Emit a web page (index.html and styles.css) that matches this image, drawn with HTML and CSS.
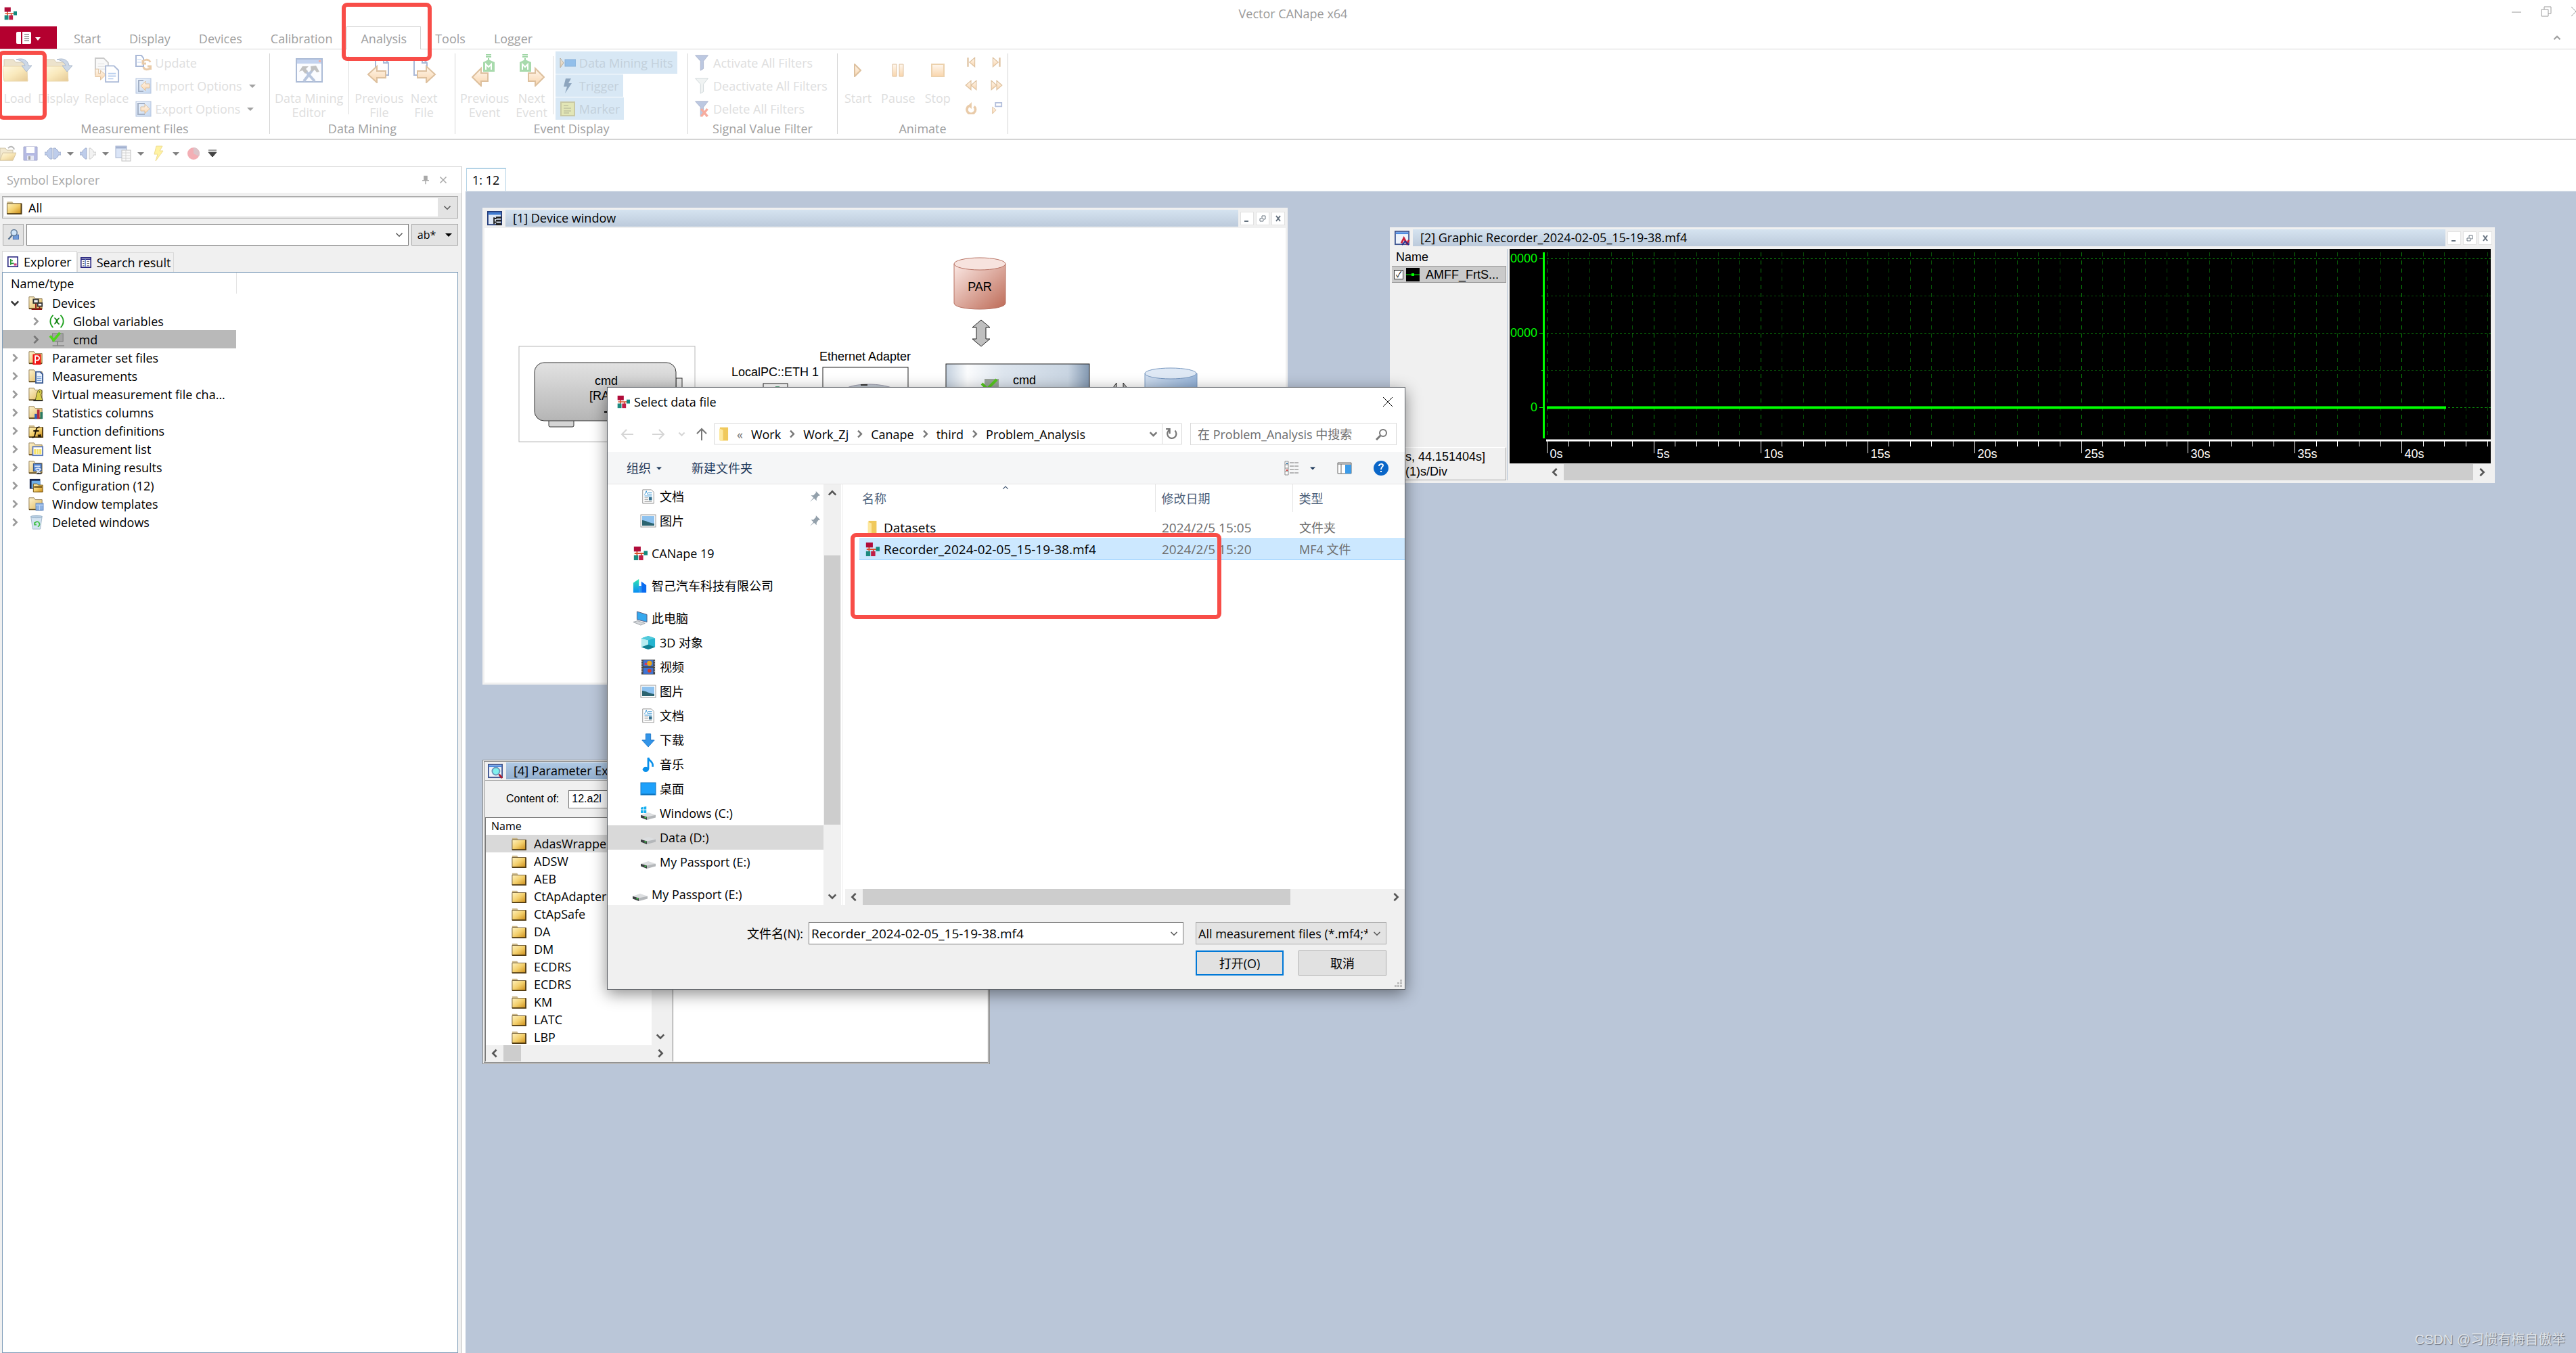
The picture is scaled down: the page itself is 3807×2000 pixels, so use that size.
FILE: index.html
```html
<!DOCTYPE html>
<html lang="zh-CN">
<head>
    <meta charset="UTF-8">
    <meta name="viewport" content="width=device-width, initial-scale=1.0">
    <title>Vector CANape x64</title>
    <link rel="stylesheet" href="styles.css">
</head>
<body>
    <!-- Icon sprite -->
    <svg class="sprite" width="0" height="0" aria-hidden="true">
        <defs>
            <linearGradient id="gold" x1="0" y1="0" x2="1" y2="1">
                <stop offset="0" stop-color="#fff3bf"/><stop offset="0.5" stop-color="#f3cf6c"/><stop offset="1" stop-color="#c98a16"/>
            </linearGradient>
            <linearGradient id="paleGold" x1="0" y1="0" x2="1" y2="1">
                <stop offset="0" stop-color="#fdf3cf"/><stop offset="1" stop-color="#e0b658"/>
            </linearGradient>
            <linearGradient id="orange" x1="0" y1="0" x2="0" y2="1">
                <stop offset="0" stop-color="#fff0dc"/><stop offset="1" stop-color="#f3a349"/>
            </linearGradient>
            <linearGradient id="blueBox" x1="0" y1="0" x2="1" y2="1">
                <stop offset="0" stop-color="#dfeafa"/><stop offset="1" stop-color="#7fa9e0"/>
            </linearGradient>
            <linearGradient id="red3d" x1="0" y1="0" x2="1" y2="1">
                <stop offset="0" stop-color="#fbe9e5"/><stop offset="1" stop-color="#bd6a56"/>
            </linearGradient>
            <linearGradient id="blue3d" x1="0" y1="0" x2="1" y2="1">
                <stop offset="0" stop-color="#d5e2f2"/><stop offset="1" stop-color="#6c94c6"/>
            </linearGradient>
            <linearGradient id="ecuGray" x1="0" y1="0" x2="0" y2="1">
                <stop offset="0" stop-color="#e2e2e2"/><stop offset="1" stop-color="#b5b5b5"/>
            </linearGradient>
            <linearGradient id="ecuBlue" x1="0" y1="0" x2="1" y2="0">
                <stop offset="0" stop-color="#c3d0de"/><stop offset="0.15" stop-color="#fbfcfd"/><stop offset="0.4" stop-color="#dde5ee"/><stop offset="0.85" stop-color="#c9d5e2"/><stop offset="1" stop-color="#8297b0"/>
            </linearGradient>
            <linearGradient id="teal" x1="0" y1="0" x2="0" y2="1">
                <stop offset="0" stop-color="#2fe6b0"/><stop offset="1" stop-color="#0a8cf5"/>
            </linearGradient>
        </defs>

        <symbol id="i-logo" viewBox="0 0 24 24">
            <path d="M7 8v8M3 12h21M14 12v6" stroke="#d8502c" stroke-width="2" fill="none"/>
            <rect x="2" y="1" width="11" height="8" fill="#b00c3a"/>
            <rect x="18" y="8" width="6" height="7" fill="#12897f"/>
            <rect x="2" y="15" width="7" height="8" fill="#1d8a80"/>
            <rect x="10" y="15" width="7" height="8" fill="#c01f48"/>
        </symbol>
        <symbol id="i-folder" viewBox="0 0 24 24">
            <path d="M1 3h8l2 3h12v16H1z" fill="#cbb88a"/>
            <path d="M1 6h22v16H1z" fill="url(#gold)" stroke="#6e5a35" stroke-width="1"/>
            <path d="M1 22h22V6" fill="none" stroke="#4f3a12" stroke-width="2"/>
        </symbol>
        <symbol id="i-pfolder" viewBox="0 0 24 24">
            <path d="M1 2h8l2 3h11v16H1z" fill="url(#paleGold)" stroke="#8e7a51" stroke-width="1"/>
            <path d="M1 21h21" stroke="#5a4418" stroke-width="2"/>
        </symbol>
        <symbol id="i-devices" viewBox="0 0 24 24">
            <use href="#i-pfolder"/>
            <rect x="8" y="6" width="8" height="6" fill="#eee" stroke="#333" stroke-width="2"/><rect x="15" y="12" width="7" height="5" fill="#fff" stroke="#333" stroke-width="2"/>
            <path d="M12 13v7M5 22h17M18 18v4" stroke="#8a1212" stroke-width="2" fill="none"/>
        </symbol>
        <symbol id="i-paramset" viewBox="0 0 24 24">
            <use href="#i-pfolder"/><rect x="7" y="6" width="13" height="17" fill="#f01414"/>
            <path d="M11 21V9h3a3 3 0 0 1 0 7h-3" stroke="#fff" stroke-width="2" fill="none"/>
        </symbol>
        <symbol id="i-measure" viewBox="0 0 24 24">
            <use href="#i-pfolder"/><path d="M12 5h7l4 4v14H12z" fill="#eaf2fd" stroke="#35568f" stroke-width="2"/>
            <path d="M14 13h7M14 16h7M14 19h7" stroke="#5f8fd0"/>
        </symbol>
        <symbol id="i-virtual" viewBox="0 0 24 24">
            <use href="#i-pfolder"/><path d="M11 22c2-6 2-16 7-18 4 0 5 5 2 8l3 10z" fill="#d9cf4a" stroke="#4d4a1d"/>
            <circle cx="18" cy="8" r="1" fill="#222"/><path d="M8 22h15" stroke="#222" stroke-width="2"/>
        </symbol>
        <symbol id="i-stats" viewBox="0 0 24 24">
            <use href="#i-pfolder"/><rect x="10" y="14" width="4" height="8" fill="#2b5bb5"/><rect x="14" y="7" width="4" height="15" fill="#b42a3d"/><rect x="19" y="11" width="4" height="11" fill="#2a7a63"/>
        </symbol>
        <symbol id="i-func" viewBox="0 0 24 24">
            <use href="#i-folder"/><path d="M18 6c-4-1-5 2-6 6l-2 8c0 2-3 3-4 2M8 12h9M15 19h3l2 3M20 18l-4 4" stroke="#1c1305" stroke-width="2" fill="none"/>
        </symbol>
        <symbol id="i-list" viewBox="0 0 24 24">
            <use href="#i-pfolder"/><rect x="7" y="8" width="16" height="14" fill="#fff" stroke="#5c79b8" stroke-width="2"/>
            <path d="M9 12h12v8H9z" fill="#f4e26a"/><path d="M13 12v8M17 12v8" stroke="#fff"/>
        </symbol>
        <symbol id="i-mining" viewBox="0 0 24 24">
            <use href="#i-pfolder"/><rect x="8" y="6" width="13" height="12" fill="#5585cf" stroke="#29487e"/>
            <path d="M10 10h9M11 15c4-3 8-2 9 1M13 22l7-8M20 22l-7-6" stroke="#d8e4f7" stroke-width="2" fill="none"/><path d="M13 22h8" stroke="#333" stroke-width="2"/>
        </symbol>
        <symbol id="i-config" viewBox="0 0 24 24">
            <rect x="2" y="1" width="17" height="16" fill="#16254f"/><rect x="5" y="4" width="14" height="12" fill="#6fb0ea"/>
            <path d="M8 9h6l2 2h7v11H8z" fill="url(#gold)" stroke="#6b4a0a"/><path d="M9 14h13" stroke="#5c3d05" stroke-width="2"/>
        </symbol>
        <symbol id="i-template" viewBox="0 0 24 24">
            <use href="#i-pfolder"/><rect x="12" y="11" width="12" height="11" fill="#8fb3e3" stroke="#5f88c4"/><path d="M12 14h12M18 14v8" stroke="#c7dbf5"/>
        </symbol>
        <symbol id="i-bin" viewBox="0 0 24 24">
            <path d="M4 3h18l-3 20H7z" fill="#d3e3f1" stroke="#9fb4c8"/><ellipse cx="13" cy="3" rx="9" ry="2" fill="#b5cde2" stroke="#8da7be"/>
            <path d="M10 16a4 4 0 1 1 5 3M10 12v4h3" stroke="#3fc043" stroke-width="2" fill="none"/>
        </symbol>
        <symbol id="i-var" viewBox="0 0 24 24">
            <path d="M6 2C0 8 0 16 6 22M18 2c6 6 6 14 0 20" stroke="#1ba01b" stroke-width="2" fill="none"/>
            <path d="M8 7c4-1 4 10 8 9M16 7c-3 0-5 9-8 9" stroke="#0c7d0c" stroke-width="2" fill="none"/>
        </symbol>
        <symbol id="i-check" viewBox="0 0 24 24">
            <rect x="5" y="2" width="17" height="13" fill="#a3a3a3" stroke="#7e7e7e"/><path d="M13 15v6M5 22h19" stroke="#8a8a8a" stroke-width="2"/>
            <path d="M1 6l6 7L17 1" stroke="#4ed51c" stroke-width="4" fill="none"/>
        </symbol>
        <symbol id="i-search-doc" viewBox="0 0 24 24">
            <rect x="11" y="12" width="11" height="9" fill="#6f9ada" stroke="#3760a5"/><circle cx="13" cy="8" r="6" fill="#cfe4f8" stroke="#5d7896" stroke-width="2"/>
            <path d="M9 13L2 21" stroke="#55708e" stroke-width="3"/>
        </symbol>
        <symbol id="i-tree" viewBox="0 0 20 20">
            <rect x="1" y="1" width="18" height="18" fill="#fff" stroke="#26247e" stroke-width="2"/><path d="M6 5v11M6 8h4M6 13h6" stroke="#2f9a3c" stroke-width="2"/><path d="M12 13h5v4h-5z" fill="#c63f7d"/>
        </symbol>
        <symbol id="i-table" viewBox="0 0 20 20">
            <rect x="1" y="1" width="18" height="18" fill="#fff" stroke="#26247e" stroke-width="2"/><path d="M1 4h18" stroke="#26247e" stroke-width="2"/><path d="M9 4v14" stroke="#6b8fd4" stroke-width="2"/><path d="M4 8h3M4 12h3M4 16h3M12 8h4M12 12h4M12 16h4" stroke="#333"/>
        </symbol>
        <symbol id="i-chev-down" viewBox="0 0 16 16"><path d="M2 5l6 6 6-6" stroke="currentColor" stroke-width="2" fill="none"/></symbol>
        <symbol id="i-chev-up" viewBox="0 0 16 16"><path d="M2 11l6-6 6 6" stroke="currentColor" stroke-width="2" fill="none"/></symbol>
        <symbol id="i-chev-right" viewBox="0 0 16 16"><path d="M5 2l6 6-6 6" stroke="currentColor" stroke-width="3" fill="none"/></symbol>
        <symbol id="i-chev-left" viewBox="0 0 16 16"><path d="M11 2L5 8l6 6" stroke="currentColor" stroke-width="3" fill="none"/></symbol>
        <symbol id="i-chev-bold" viewBox="0 0 16 16"><path d="M2 5l6 6 6-6" stroke="currentColor" stroke-width="3" fill="none"/></symbol>
        <symbol id="i-chev-bold-up" viewBox="0 0 16 16"><path d="M2 11l6-6 6 6" stroke="currentColor" stroke-width="3" fill="none"/></symbol>
        <symbol id="i-caret" viewBox="0 0 10 10"><path d="M0 3h10L5 8z" fill="currentColor"/></symbol>
        <symbol id="i-x" viewBox="0 0 16 16"><path d="M1 1l14 14M15 1L1 15" stroke="currentColor" fill="none"/></symbol>
        <symbol id="i-x-bold" viewBox="0 0 16 16"><path d="M2 2l12 12M14 2L2 14" stroke="currentColor" stroke-width="2" fill="none"/></symbol>
        <symbol id="i-pin" viewBox="0 0 16 20"><path d="M4 1h8v9h3v2H1v-2h3zM7 12h2v7H7z" fill="currentColor"/></symbol>

        <!-- Ribbon -->
        <symbol id="r-load" viewBox="0 0 44 36">
            <path d="M2 2h14l3 4h17v26H2z" fill="#d8c390" stroke="#a08a55"/><path d="M0 12h35l2 22H2z" fill="url(#gold)" stroke="#d0a445"/>
            <path d="M20 2c10-3 17 1 18 9h5l-8 9-7-9h5c-1-4-6-8-13-9z" fill="#8fa9cc" stroke="#48658f"/>
        </symbol>
        <symbol id="r-replace" viewBox="0 0 40 40">
            <path d="M2 1h13l7 7v18H2z" fill="#f2f2f2" stroke="#8c8c8c" stroke-width="2"/><path d="M6 10h10M6 14h12M6 18h12" stroke="#b5b5b5"/>
            <path d="M2 18v12h8v5l8-8-8-7v5H7v-7z" fill="url(#orange)" stroke="#b57529"/>
            <path d="M18 13h13l7 7v18H18z" fill="#fff" stroke="#4466a8" stroke-width="2"/><path d="M22 25h12M22 29h12M22 33h8" stroke="#6c9add" stroke-width="2"/>
        </symbol>
        <symbol id="r-update" viewBox="0 0 24 24">
            <path d="M1 1h8l3 4v12H1z" fill="#fff" stroke="#4466a8" stroke-width="2"/><path d="M3 7h6M3 11h6" stroke="#6c9add"/>
            <path d="M11 12c0-6 10-6 11-1M11 8v5h5M23 17c-1 6-10 6-11 1M23 22v-5h-5" stroke="#cf8d43" stroke-width="3" fill="none"/>
        </symbol>
        <symbol id="r-import" viewBox="0 0 24 24">
            <rect x="1" y="1" width="22" height="22" fill="url(#blueBox)" stroke="#5a7cb5"/><path d="M12 4H5v16h7" fill="none" stroke="#34517f" stroke-width="2"/>
            <path d="M21 9h-6V5l-7 7 7 7v-4h6z" fill="url(#orange)" stroke="#b57529"/>
        </symbol>
        <symbol id="r-export" viewBox="0 0 24 24">
            <rect x="1" y="1" width="22" height="22" fill="url(#blueBox)" stroke="#5a7cb5"/><path d="M14 4H4v16h10" fill="none" stroke="#34517f" stroke-width="2"/>
            <path d="M8 9h6V5l7 7-7 7v-4H8z" fill="url(#orange)" stroke="#b57529"/>
        </symbol>
        <symbol id="r-editor" viewBox="0 0 40 36">
            <rect x="1" y="1" width="38" height="34" fill="#f7faff" stroke="#4a69a6" stroke-width="2"/><rect x="2" y="2" width="36" height="6" fill="#7da0dc"/><path d="M34 3h3v3h-3z" fill="#e0523c"/>
            <path d="M12 34l14-18" stroke="#6482b8" stroke-width="4"/><path d="M28 34L12 16" stroke="#6482b8" stroke-width="4"/>
            <path d="M5 20l5-8h9l-4 4 3 3-4 4-4-5zM22 12l8-1 5 9-4 1-3-4-5 3z" fill="#777"/>
        </symbol>
        <symbol id="r-prev" viewBox="0 0 34 38">
            <path d="M12 1h12l7 7v18H12z" fill="#fff" stroke="#4466a8" stroke-width="2"/><path d="M24 1v7h7" fill="none" stroke="#4466a8" stroke-width="2"/>
            <path d="M27 20H14v-7L1 25l13 12v-7h13z" fill="url(#orange)" stroke="#b57529" stroke-width="2"/>
        </symbol>
        <symbol id="r-next" viewBox="0 0 34 38">
            <path d="M2 1h12l7 7v18H2z" fill="#fff" stroke="#4466a8" stroke-width="2"/><path d="M14 1v7h7" fill="none" stroke="#4466a8" stroke-width="2"/>
            <path d="M7 20h13v-7l13 12-13 12v-7H7z" fill="url(#orange)" stroke="#b57529" stroke-width="2"/>
        </symbol>
        <symbol id="r-prev-ev" viewBox="0 0 38 48">
            <path d="M21 1h8M21 4h8M25 6v5" stroke="#2fa53c" stroke-width="2"/><path d="M17 12l8-4 9 4v14H17z" fill="#3fae4a"/><path d="M21 23v-8l4 4 4-4v8" stroke="#fff" stroke-width="2" fill="none"/>
            <path d="M24 28H14v-7L1 34l13 13v-7h10z" fill="url(#orange)" stroke="#b57529" stroke-width="2"/>
        </symbol>
        <symbol id="r-next-ev" viewBox="0 0 38 48">
            <path d="M5 1h8M5 4h8M9 6v5" stroke="#2fa53c" stroke-width="2"/><path d="M1 12l8-4 9 4v14H1z" fill="#3fae4a"/><path d="M5 23v-8l4 4 4-4v8" stroke="#fff" stroke-width="2" fill="none"/>
            <path d="M14 28h10v-7l13 13-13 13v-7H14z" fill="url(#orange)" stroke="#b57529" stroke-width="2"/>
        </symbol>
        <symbol id="r-hits" viewBox="0 0 24 24"><path d="M1 5l5 7-5 7z" fill="url(#orange)" stroke="#8c6b3c"/><rect x="8" y="7" width="16" height="10" fill="#3f8fdd" stroke="#2a6fb5"/></symbol>
        <symbol id="r-trigger" viewBox="0 0 24 24"><path d="M9 1h8l-4 7h5L8 23l3-10H6z" fill="#34567c"/></symbol>
        <symbol id="r-marker" viewBox="0 0 24 24"><rect x="2" y="2" width="20" height="20" fill="#efe56b" stroke="#b9a441" stroke-width="2"/><path d="M6 7h7M6 11h11M6 15h11M6 18h8" stroke="#7d6e1e"/></symbol>
        <symbol id="r-filter" viewBox="0 0 24 28"><path d="M1 1h22l-8 10v13l-5 3V11z" fill="#6d86bd" stroke="#41588f"/></symbol>
        <symbol id="r-filter-off" viewBox="0 0 24 28"><path d="M1 1h22l-8 10v13l-5 3V11z" fill="#dfe6e6" stroke="#8fa1a6"/></symbol>
        <symbol id="r-filter-del" viewBox="0 0 24 28"><path d="M1 1h22l-8 10v13l-5 3V11z" fill="#6d86bd" stroke="#41588f"/><path d="M11 14l11 13M22 14L11 27" stroke="#ee4a2b" stroke-width="4"/></symbol>
        <symbol id="r-start" viewBox="0 0 20 20"><path d="M5 1l9 9-9 9z" fill="url(#orange)" stroke="#b57529" stroke-width="2"/></symbol>
        <symbol id="r-pause" viewBox="0 0 20 20"><path d="M2 1h6v18H2zM12 1h6v18h-6z" fill="url(#orange)" stroke="#b57529"/></symbol>
        <symbol id="r-stop" viewBox="0 0 20 20"><rect x="1" y="1" width="18" height="18" fill="url(#orange)" stroke="#d79a4a" stroke-width="2"/></symbol>
        <symbol id="r-first" viewBox="0 0 16 16"><path d="M4 2v12" stroke="#b57529" stroke-width="2"/><path d="M13 2L6 8l7 6z" fill="url(#orange)" stroke="#b57529"/></symbol>
        <symbol id="r-last" viewBox="0 0 16 16"><path d="M12 2v12" stroke="#b57529" stroke-width="2"/><path d="M3 2l7 6-7 6z" fill="url(#orange)" stroke="#b57529"/></symbol>
        <symbol id="r-rew" viewBox="0 0 16 16"><path d="M8 2L1 8l7 6zM15 2L8 8l7 6z" fill="url(#orange)" stroke="#b57529"/></symbol>
        <symbol id="r-fwd" viewBox="0 0 16 16"><path d="M1 2l7 6-7 6zM8 2l7 6-7 6z" fill="url(#orange)" stroke="#b57529"/></symbol>
        <symbol id="r-loop" viewBox="0 0 18 20"><path d="M14 7a7 7 0 1 1-8-1" stroke="#cf8d43" stroke-width="4" fill="none"/><path d="M4 6l6-6v11z" fill="#cf8d43"/></symbol>
        <symbol id="r-step" viewBox="0 0 18 20"><path d="M2 8l6 5-6 6z" fill="url(#orange)" stroke="#b57529"/><rect x="7" y="1" width="10" height="6" fill="#fff" stroke="#5a76b5" stroke-width="2"/></symbol>

        <!-- Quick access -->
        <symbol id="q-open" viewBox="0 0 24 24"><path d="M0 4h8l2 3h9v15H0z" fill="#e7d5a3" stroke="#a18b55"/><path d="M4 11h20l-5 11H0z" fill="url(#gold)" stroke="#b1914c"/><path d="M12 4c4-4 8-2 9 2" stroke="#777" stroke-width="2" fill="none"/></symbol>
        <symbol id="q-save" viewBox="0 0 24 24"><path d="M2 2h20v20H2z" fill="#6d77c9" stroke="#4a5297"/><path d="M6 2h12v9H6z" fill="#fff"/><path d="M7 15h10v7H7z" fill="#cfd3ea"/><path d="M9 16h3v5H9z" fill="#444"/></symbol>
        <symbol id="q-on" viewBox="0 0 24 24"><path d="M11 4v16H8l-4-4v-2H0v-4h4V8l4-4zM13 4v16h3l4-4v-2h4v-4h-4V8l-4-4z" fill="#7f9cd8" stroke="#49639c"/></symbol>
        <symbol id="q-off" viewBox="0 0 24 24"><path d="M10 4v16H8l-4-4v-2H0v-4h4V8l4-4z" fill="#7f9cd8" stroke="#49639c"/><path d="M14 4v16h2l4-4v-2h4v-4h-4V8l-4-4z" fill="#e6e6e6" stroke="#999"/></symbol>
        <symbol id="q-pages" viewBox="0 0 24 24"><rect x="1" y="1" width="16" height="17" fill="#b9cdf0" stroke="#4c68a3"/><path d="M1 3h16" stroke="#4c68a3" stroke-width="3"/><rect x="10" y="7" width="13" height="16" fill="#f6f6f6" stroke="#888"/><path d="M10 11h13M10 15h13M10 19h13M16 7v16" stroke="#aaa"/></symbol>
        <symbol id="q-bolt" viewBox="0 0 24 24"><path d="M9 1h9l-4 7h5L8 23l3-10H6z" fill="#ffe94a" stroke="#e0b924"/></symbol>
        <symbol id="q-rec" viewBox="0 0 24 24"><circle cx="12" cy="12" r="9" fill="#e8606c"/><path d="M12 12V3a9 9 0 0 1 8 13z" fill="#b98a94"/></symbol>

        <!-- File dialog -->
        <symbol id="f-doc" viewBox="0 0 24 24"><path d="M3 1h14l4 4v18H3z" fill="#fff" stroke="#8c8c8c"/><path d="M6 9l3-6 2 6M12 5h6M12 8h6M6 11h12" stroke="#2f8fd0" fill="none"/><path d="M6 14h6M6 17h6M6 20h12" stroke="#999"/><path d="M13 13h5v5h-5z" fill="#35708f"/></symbol>
        <symbol id="f-pic" viewBox="0 0 24 20"><rect x="1" y="1" width="22" height="18" fill="#fff" stroke="#9a9a9a"/><path d="M3 3h18v14H3z" fill="#8ec2ef"/><path d="M3 9c5 0 10 4 18 5v3H3z" fill="#2c6470"/></symbol>
        <symbol id="f-corp" viewBox="0 0 24 24"><path d="M1 7l9-6v22H1z" fill="url(#teal)"/><path d="M14 5l8 6v12h-8z" fill="#0a6cf0"/><path d="M10 12h4v11h-4z" fill="#2196f3"/></symbol>
        <symbol id="f-pc" viewBox="0 0 24 24"><path d="M7 1l16 5v12L7 14z" fill="#35a8ee" stroke="#557"/><path d="M1 18l7-2 12 4-7 3z" fill="#d5d8db" stroke="#9aa0a6"/></symbol>
        <symbol id="f-3d" viewBox="0 0 24 24"><path d="M12 1l11 4v14l-11 4-11-4V5z" fill="#25b4cf"/><path d="M1 5l11 3v8L1 19z" fill="#b6ecf0"/><path d="M12 1l11 4-11 3L1 5z" fill="#52cadb"/><path d="M1 19l11-4 11 4-11 4z" fill="#0f7f91"/></symbol>
        <symbol id="f-video" viewBox="0 0 24 24"><rect x="1" y="0" width="22" height="24" fill="#444"/><rect x="4" y="1" width="16" height="10" fill="#3e74d4"/><rect x="4" y="13" width="16" height="10" fill="#3e74d4"/><circle cx="14" cy="6" r="4" fill="#e9a51c"/><circle cx="8" cy="7" r="2" fill="#d83a5a"/><circle cx="14" cy="18" r="3" fill="#da3b22"/><path d="M2 2v20M22 2v20" stroke="#eee" stroke-dasharray="2 2"/></symbol>
        <symbol id="f-down" viewBox="0 0 24 24"><path d="M8 2h8v10h6L12 23 2 12h6z" fill="#3294e8" stroke="#1d77c8"/></symbol>
        <symbol id="f-music" viewBox="0 0 24 24"><ellipse cx="8" cy="20" rx="5" ry="4" fill="#0a90ea"/><path d="M12 20V1c1 6 9 6 7 15" stroke="#0a90ea" stroke-width="3" fill="none"/></symbol>
        <symbol id="f-desk" viewBox="0 0 24 20"><rect x="1" y="1" width="22" height="18" fill="#1ea1fb" stroke="#1079c4"/><path d="M2 18h20" stroke="#0c5a96"/></symbol>
        <symbol id="f-drive" viewBox="0 0 24 24"><path d="M0 15l12-4 12 4-9 4z" fill="#dcdee0"/><path d="M0 15l10 3v5L0 19z" fill="#3c3f42"/><path d="M10 18l14-3v4l-14 4z" fill="#b4b7ba"/><path d="M6 19h3" stroke="#3ed04a" stroke-width="2"/></symbol>
        <symbol id="f-win" viewBox="0 0 24 24"><use href="#f-drive"/><path d="M0 3l4-1v4H0zM5 2l4-1v5H5zM0 7h4v5H0zM5 7h4v5H5z" fill="#17aff0"/></symbol>
        <symbol id="f-folder" viewBox="0 0 16 24"><path d="M2 1h13v21H2z" fill="#f0c95c"/><path d="M1 3l6 2v18l-6-2z" fill="#fde89f"/></symbol>
        <symbol id="f-pin" viewBox="0 0 20 20"><path d="M12 1l7 7-3 1-3 4v4l-4-4-7 6 6-7-4-4h4l4-4z" fill="#93a0ab"/></symbol>
    </svg>

    <header class="titlebar">
        <svg class="ic"><use href="#i-logo"/></svg>
        <h1>Vector CANape x64</h1>
        <div class="window-controls">
            <button aria-label="Minimize"><svg viewBox="0 0 16 16"><path d="M1 9h14" stroke="currentColor"/></svg></button>
            <button aria-label="Restore"><svg viewBox="0 0 16 16"><path d="M1 5h10v10H1zM5 5V1h10v10h-4" stroke="currentColor" fill="none"/></svg></button>
            <button aria-label="Close"><svg><use href="#i-x"/></svg></button>
        </div>
    </header>

    <nav class="tabs">
        <button class="app-menu" aria-label="Application menu">
            <svg viewBox="0 0 38 20"><rect x="1" y="1" width="22" height="18" rx="2" fill="#fff"/><path d="M9 1v18" stroke="#b4002f" stroke-width="2"/><path d="M13 5h7M13 8h7M13 11h7M13 14h7" stroke="#555"/><path d="M29 9h8l-4 5z" fill="#fff"/></svg>
        </button>
        <a href="#">Start</a>
        <a href="#">Display</a>
        <a href="#">Devices</a>
        <a href="#">Calibration</a>
        <a href="#" class="current">Analysis</a>
        <a href="#">Tools</a>
        <a href="#">Logger</a>
        <button class="collapse" aria-label="Collapse ribbon"><svg><use href="#i-chev-bold-up"/></svg></button>
    </nav>

    <section class="ribbon">
        <div class="group">
            <div class="tools files">
                <button class="big" disabled><svg class="wide"><use href="#r-load"/></svg>Load</button>
                <button class="big" disabled><svg class="wide"><use href="#r-load"/></svg>Display</button>
                <button class="big" disabled><svg><use href="#r-replace"/></svg>Replace</button>
                <div class="stack">
                    <button disabled><svg><use href="#r-update"/></svg>Update</button>
                    <button disabled><svg><use href="#r-import"/></svg>Import Options<svg class="caret"><use href="#i-caret"/></svg></button>
                    <button disabled><svg><use href="#r-export"/></svg>Export Options<svg class="caret"><use href="#i-caret"/></svg></button>
                </div>
            </div>
            <h2>Measurement Files</h2>
        </div>
        <div class="group">
            <div class="tools">
                <button class="big" disabled><svg><use href="#r-editor"/></svg>Data Mining<br>Editor</button>
                <hr>
                <button class="big" disabled><svg><use href="#r-prev"/></svg>Previous<br>File</button>
                <button class="big" disabled><svg><use href="#r-next"/></svg>Next<br>File</button>
            </div>
            <h2>Data Mining</h2>
        </div>
        <div class="group">
            <div class="tools">
                <button class="big" disabled><svg class="tall"><use href="#r-prev-ev"/></svg>Previous<br>Event</button>
                <button class="big" disabled><svg class="tall"><use href="#r-next-ev"/></svg>Next<br>Event</button>
                <hr>
                <div class="stack toggles">
                    <button disabled><svg><use href="#r-hits"/></svg>Data Mining Hits</button>
                    <button disabled><svg><use href="#r-trigger"/></svg>Trigger</button>
                    <button disabled><svg><use href="#r-marker"/></svg>Marker</button>
                </div>
            </div>
            <h2>Event Display</h2>
        </div>
        <div class="group">
            <div class="tools">
                <div class="stack">
                    <button disabled><svg><use href="#r-filter"/></svg>Activate All Filters</button>
                    <button disabled><svg><use href="#r-filter-off"/></svg>Deactivate All Filters</button>
                    <button disabled><svg><use href="#r-filter-del"/></svg>Delete All Filters</button>
                </div>
            </div>
            <h2>Signal Value Filter</h2>
        </div>
        <div class="group">
            <div class="tools animate">
                <button class="big" disabled><svg class="small"><use href="#r-start"/></svg>Start</button>
                <button class="big" disabled><svg class="small"><use href="#r-pause"/></svg>Pause</button>
                <button class="big" disabled><svg class="small"><use href="#r-stop"/></svg>Stop</button>
                <div class="transport">
                    <button disabled aria-label="First"><svg><use href="#r-first"/></svg></button>
                    <button disabled aria-label="Last"><svg><use href="#r-last"/></svg></button>
                    <button disabled aria-label="Rewind"><svg><use href="#r-rew"/></svg></button>
                    <button disabled aria-label="Forward"><svg><use href="#r-fwd"/></svg></button>
                    <button disabled aria-label="Loop"><svg><use href="#r-loop"/></svg></button>
                    <button disabled aria-label="Step"><svg><use href="#r-step"/></svg></button>
                </div>
            </div>
            <h2>Animate</h2>
        </div>
    </section>

    <div class="quick">
        <button aria-label="Open"><svg><use href="#q-open"/></svg></button>
        <button aria-label="Save"><svg><use href="#q-save"/></svg></button>
        <button aria-label="Go online"><svg><use href="#q-on"/></svg><svg class="caret"><use href="#i-caret"/></svg></button>
        <button aria-label="Go offline"><svg><use href="#q-off"/></svg><svg class="caret"><use href="#i-caret"/></svg></button>
        <button aria-label="Pages"><svg><use href="#q-pages"/></svg><svg class="caret"><use href="#i-caret"/></svg></button>
        <button aria-label="Start measurement"><svg><use href="#q-bolt"/></svg><svg class="caret"><use href="#i-caret"/></svg></button>
        <button aria-label="Record"><svg><use href="#q-rec"/></svg></button>
        <button class="more" aria-label="Customize"><svg viewBox="0 0 12 12"><path d="M0 1h12M0 4h12l-6 7z" fill="#444" stroke="#444"/></svg></button>
    </div>

    <main>
        <aside class="explorer">
            <div class="panel-title">
                <h2>Symbol Explorer</h2>
                <button aria-label="Pin"><svg><use href="#i-pin"/></svg></button>
                <button aria-label="Close"><svg><use href="#i-x-bold"/></svg></button>
            </div>
            <div class="combo">
                <svg class="ic"><use href="#i-folder"/></svg>
                <select aria-label="Filter"><option>All</option></select>
                <span class="drop"><svg><use href="#i-chev-down"/></svg></span>
            </div>
            <div class="search-row">
                <button aria-label="Search"><svg class="ic"><use href="#i-search-doc"/></svg></button>
                <div class="search-box"><input type="text" aria-label="Search text"><svg><use href="#i-chev-down"/></svg></div>
                <button class="mode">ab*<svg><use href="#i-caret"/></svg></button>
            </div>
            <div class="panel-tabs">
                <button class="current"><svg><use href="#i-tree"/></svg>Explorer</button>
                <button><svg><use href="#i-table"/></svg>Search result</button>
            </div>
            <div class="tree-box">
                <div class="tree-head">Name/type</div>
                <ul class="tree">
                    <li class="open"><svg class="exp"><use href="#i-chev-bold"/></svg><svg class="ic"><use href="#i-devices"/></svg>Devices</li>
                    <li class="sub"><svg class="exp"><use href="#i-chev-right"/></svg><svg class="ic"><use href="#i-var"/></svg>Global variables</li>
                    <li class="sub selected"><svg class="exp"><use href="#i-chev-right"/></svg><svg class="ic"><use href="#i-check"/></svg>cmd</li>
                    <li><svg class="exp"><use href="#i-chev-right"/></svg><svg class="ic"><use href="#i-paramset"/></svg>Parameter set files</li>
                    <li><svg class="exp"><use href="#i-chev-right"/></svg><svg class="ic"><use href="#i-measure"/></svg>Measurements</li>
                    <li><svg class="exp"><use href="#i-chev-right"/></svg><svg class="ic"><use href="#i-virtual"/></svg>Virtual measurement file cha...</li>
                    <li><svg class="exp"><use href="#i-chev-right"/></svg><svg class="ic"><use href="#i-stats"/></svg>Statistics columns</li>
                    <li><svg class="exp"><use href="#i-chev-right"/></svg><svg class="ic"><use href="#i-func"/></svg>Function definitions</li>
                    <li><svg class="exp"><use href="#i-chev-right"/></svg><svg class="ic"><use href="#i-list"/></svg>Measurement list</li>
                    <li><svg class="exp"><use href="#i-chev-right"/></svg><svg class="ic"><use href="#i-mining"/></svg>Data Mining results</li>
                    <li><svg class="exp"><use href="#i-chev-right"/></svg><svg class="ic"><use href="#i-config"/></svg>Configuration (12)</li>
                    <li><svg class="exp"><use href="#i-chev-right"/></svg><svg class="ic"><use href="#i-template"/></svg>Window templates</li>
                    <li><svg class="exp"><use href="#i-chev-right"/></svg><svg class="ic"><use href="#i-bin"/></svg>Deleted windows</li>
                </ul>
            </div>
        </aside>

        <section class="workspace">
            <div class="page-tabs"><button>1: 12</button></div>
            <div class="desktop">
                <article class="win device-win">
                    <div class="win-title">
                        <svg class="win-icon" viewBox="0 0 24 24"><rect x="1" y="1" width="22" height="21" fill="#dfe8f5" stroke="#223b7a" stroke-width="2"/><path d="M2 4h20" stroke="#3f7bd0" stroke-width="4"/><path d="M11 10v11M11 12h4M11 18h4" stroke="#222" stroke-width="2"/><path d="M14 9h9v3h-9zM14 14h9v3h-9zM14 19h9v4h-9z" fill="#222"/></svg>
                        <h3>[1] Device window</h3>
                        <button aria-label="Minimize"><svg viewBox="0 0 12 12"><path d="M2 10h6" stroke="currentColor" stroke-width="2"/></svg></button>
                        <button aria-label="Restore"><svg viewBox="0 0 12 12"><path d="M2 6h5v4H2zM5 5V2h5v5H8" stroke="currentColor" stroke-width="1" fill="none"/></svg></button>
                        <button aria-label="Close"><svg viewBox="0 0 12 12"><path d="M3 2l6 8M9 2l-6 8" stroke="currentColor" stroke-width="2"/></svg></button>
                    </div>
                    <svg class="diagram" viewBox="716 337 1184 672">
                        <rect x="767" y="512" width="260" height="141" fill="#fff" stroke="#b8b8b8"/>
                        <rect x="999" y="559" width="9" height="40" fill="#e8e8e8" stroke="#333"/>
                        <rect x="811" y="620" width="37" height="11" rx="2" fill="#d5d5d5" stroke="#333"/>
                        <rect x="790" y="536" width="209" height="86" rx="14" fill="url(#ecuGray)" stroke="#333" stroke-width="1"/>
                        <text x="879" y="569">cmd</text>
                        <text x="871" y="591">[RAM]</text>
                        <path d="M893 609h8" stroke="#000" stroke-width="2"/>
                        <text x="1081" y="556">LocalPC::ETH 1</text>
                        <rect x="1128" y="567" width="36" height="30" fill="#fff" stroke="#222"/><path d="M1146 571h6v4h-6z" fill="#6a8"/>
                        <text x="1211" y="533">Ethernet Adapter</text>
                        <rect x="1216" y="543" width="126" height="70" fill="#fff" stroke="#222"/>
                        <path d="M1250 574c16-8 50-8 70 0" fill="#c5ccd6" stroke="#99a"/><path d="M1272 569h10" stroke="#333" stroke-width="2"/>
                        <rect x="1398" y="538" width="212" height="70" fill="url(#ecuBlue)" stroke="#222"/>
                        <path d="M1455 560h21v20h-21z" fill="#9aa39a"/><path d="M1451 567l8 8 14-14" stroke="#55c81e" stroke-width="4" fill="none"/>
                        <text x="1497" y="568">cmd</text>
                        <path d="M1410 390v58c0 12 76 12 76 0v-58z" fill="url(#red3d)" stroke="#b77263"/>
                        <ellipse cx="1448" cy="390" rx="38" ry="9" fill="#f7e3de" stroke="#b77263"/>
                        <text x="1448" y="430" text-anchor="middle">PAR</text>
                        <path d="M1450 473l13 11h-6v17h6l-13 11-13-11h6v-17h-6z" fill="#bfbfbf" stroke="#222"/>
                        <path d="M1640 580l10-14v9h10v-9l11 14z" fill="#bfbfbf" stroke="#222"/>
                        <path d="M1692 552v58h77v-58z" fill="url(#blue3d)" stroke="#7898c0"/>
                        <ellipse cx="1730" cy="552" rx="38" ry="8" fill="#dfe9f5" stroke="#7898c0"/>
                    </svg>
                </article>

                <article class="win graphic-win">
                    <div class="win-title">
                        <svg class="win-icon" viewBox="0 0 24 24"><rect x="1" y="1" width="22" height="21" fill="#eef3fb" stroke="#3f5590" stroke-width="2"/><path d="M2 4h20" stroke="#4f8ce0" stroke-width="3"/><path d="M11 20l4-8 5 9 3-6" stroke="#c8213a" stroke-width="3" fill="none"/><path d="M12 23l5-6 6 6" stroke="#1f2b90" stroke-width="2" fill="none"/></svg>
                        <h3>[2] Graphic Recorder_2024-02-05_15-19-38.mf4</h3>
                        <button aria-label="Minimize"><svg viewBox="0 0 12 12"><path d="M2 10h6" stroke="currentColor" stroke-width="2"/></svg></button>
                        <button aria-label="Restore"><svg viewBox="0 0 12 12"><path d="M2 6h5v4H2zM5 5V2h5v5H8" stroke="currentColor" stroke-width="1" fill="none"/></svg></button>
                        <button aria-label="Close"><svg viewBox="0 0 12 12"><path d="M3 2l6 8M9 2l-6 8" stroke="currentColor" stroke-width="2"/></svg></button>
                    </div>
                    <div class="graphic-body">
                        <div class="legend">
                            <div class="legend-head">Name</div>
                            <label class="signal"><input type="checkbox" checked><svg viewBox="0 0 20 20"><path d="M0 0h20v20H0z"/><path d="M0 10h20M8 10h4" stroke="#0f0" stroke-width="1"/><path d="M8 8h4v4H8z" fill="#0f0"/></svg>AMFF_FrtS...</label>
                            <div class="range">[0s, 44.151404s]<br>5 (1)s/Div</div>
                        </div>
                        <div class="plot-area">
                            <svg id="plot" class="plot" viewBox="2231 368 1450 317"></svg>
                            <div class="hscroll plot-scroll"><svg><use href="#i-chev-left"/></svg><span class="thumb"></span><svg><use href="#i-chev-right"/></svg></div>
                        </div>
                    </div>
                </article>

                <article class="win param-win">
                    <div class="win-title">
                        <svg class="win-icon" viewBox="0 0 24 24"><rect x="1" y="1" width="22" height="21" fill="#eef3fb" stroke="#3f5590" stroke-width="2"/><path d="M2 4h20" stroke="#4f8ce0" stroke-width="3"/><circle cx="13" cy="12" r="6" fill="#7ff0ee" stroke="#6a97b8" stroke-width="2"/><path d="M18 17l5 6" stroke="#b0182a" stroke-width="3"/></svg>
                        <h3>[4] Parameter Explorer</h3>
                    </div>
                    <div class="content-of">
                        <label for="source">Content of:</label>
                        <input id="source" type="text" value="12.a2l">
                    </div>
                    <div class="param-body">
                        <div class="param-list">
                            <div class="list-head">Name</div>
                            <div class="list-main">
                                <ul>
                                    <li class="selected"><svg class="ic"><use href="#i-folder"/></svg>AdasWrapper</li>
                                    <li><svg class="ic"><use href="#i-folder"/></svg>ADSW</li>
                                    <li><svg class="ic"><use href="#i-folder"/></svg>AEB</li>
                                    <li><svg class="ic"><use href="#i-folder"/></svg>CtApAdapter</li>
                                    <li><svg class="ic"><use href="#i-folder"/></svg>CtApSafe</li>
                                    <li><svg class="ic"><use href="#i-folder"/></svg>DA</li>
                                    <li><svg class="ic"><use href="#i-folder"/></svg>DM</li>
                                    <li><svg class="ic"><use href="#i-folder"/></svg>ECDRS</li>
                                    <li><svg class="ic"><use href="#i-folder"/></svg>ECDRS</li>
                                    <li><svg class="ic"><use href="#i-folder"/></svg>KM</li>
                                    <li><svg class="ic"><use href="#i-folder"/></svg>LATC</li>
                                    <li><svg class="ic"><use href="#i-folder"/></svg>LBP</li>
                                </ul>
                                <div class="vscroll"><svg><use href="#i-chev-bold"/></svg></div>
                            </div>
                            <div class="hscroll"><svg><use href="#i-chev-left"/></svg><span class="thumb"></span><svg><use href="#i-chev-right"/></svg></div>
                        </div>
                        <div class="param-view"></div>
                    </div>
                </article>
                <p class="credit">CSDN @习惯有梅自傲举</p>
            </div>
        </section>
    </main>

    <section class="dialog" role="dialog" aria-label="Select data file">
        <div class="dialog-title">
            <svg class="ic"><use href="#i-logo"/></svg>
            <h2>Select data file</h2>
            <button aria-label="Close"><svg><use href="#i-x"/></svg></button>
        </div>
        <div class="nav-row">
            <button class="off" aria-label="Back"><svg viewBox="0 0 20 20"><path d="M19 10H2M9 3l-7 7 7 7" stroke="currentColor" stroke-width="2" fill="none"/></svg></button>
            <button class="off" aria-label="Forward"><svg viewBox="0 0 20 20"><path d="M1 10h17M11 3l7 7-7 7" stroke="currentColor" stroke-width="2" fill="none"/></svg></button>
            <button class="off recent" aria-label="Recent"><svg><use href="#i-chev-bold"/></svg></button>
            <button class="up" aria-label="Up"><svg viewBox="0 0 20 20"><path d="M10 19V2M3 9l7-7 7 7" stroke="currentColor" stroke-width="2" fill="none"/></svg></button>
            <div class="address">
                <svg class="f-folder"><use href="#f-folder"/></svg>
                <span class="root">«</span>
                <a href="#">Work</a><svg><use href="#i-chev-right"/></svg>
                <a href="#">Work_Zj</a><svg><use href="#i-chev-right"/></svg>
                <a href="#">Canape</a><svg><use href="#i-chev-right"/></svg>
                <a href="#">third</a><svg><use href="#i-chev-right"/></svg>
                <a href="#">Problem_Analysis</a>
                <svg class="history"><use href="#i-chev-bold"/></svg>
                <button aria-label="Refresh"><svg viewBox="0 0 18 18"><path d="M13 4a6 6 0 1 1-7-1M1 2h5v6" stroke="currentColor" stroke-width="2" fill="none"/></svg></button>
            </div>
            <div class="find">
                <input type="text" aria-label="Search folder" placeholder="在 Problem_Analysis 中搜索">
                <svg viewBox="0 0 18 18"><circle cx="11" cy="7" r="5" stroke="currentColor" stroke-width="2" fill="none"/><path d="M7 11l-6 6" stroke="currentColor" stroke-width="3"/></svg>
            </div>
        </div>
        <div class="commands">
            <button>组织<svg class="caret"><use href="#i-caret"/></svg></button>
            <button>新建文件夹</button>
            <button class="view" aria-label="View"><svg viewBox="0 0 22 22"><path d="M1 1h5v20H1zM1 6h5M1 11h5M1 16h5" stroke="#8a8a8a" fill="#fff"/><path d="M3 3h2v2H3z" fill="#37a"/><path d="M3 13h2v2H3z" fill="#c33"/><path d="M8 3h14M8 8h14M8 13h14M8 18h14" stroke="#777" stroke-dasharray="6 1"/></svg><svg class="caret"><use href="#i-caret"/></svg></button>
            <button class="pane" aria-label="Preview pane"><svg viewBox="0 0 22 18"><path d="M1 1h20v16H1zM1 3h20M6 3v14" stroke="#666" fill="#fff"/><path d="M12 4h9v13h-9z" fill="#3c9be8"/></svg></button>
            <button class="help" aria-label="Help"><svg viewBox="0 0 22 22"><circle cx="11" cy="11" r="11" fill="#0a66c8"/><path d="M8 8c0-4 6-4 6-1 0 2-3 2-3 6M11 15v2" stroke="#fff" stroke-width="2" fill="none"/></svg></button>
        </div>
        <div class="panes">
            <ul class="places">
                <li class="sub"><svg class="ic"><use href="#f-doc"/></svg>文档<svg class="pin"><use href="#f-pin"/></svg></li>
                <li class="sub"><svg class="ic"><use href="#f-pic"/></svg>图片<svg class="pin"><use href="#f-pin"/></svg></li>
                <li class="root"><svg class="ic"><use href="#i-logo"/></svg>CANape 19</li>
                <li class="root"><svg class="ic"><use href="#f-corp"/></svg>智己汽车科技有限公司</li>
                <li class="root"><svg class="ic"><use href="#f-pc"/></svg>此电脑</li>
                <li class="sub"><svg class="ic"><use href="#f-3d"/></svg>3D 对象</li>
                <li class="sub"><svg class="ic"><use href="#f-video"/></svg>视频</li>
                <li class="sub"><svg class="ic"><use href="#f-pic"/></svg>图片</li>
                <li class="sub"><svg class="ic"><use href="#f-doc"/></svg>文档</li>
                <li class="sub"><svg class="ic"><use href="#f-down"/></svg>下载</li>
                <li class="sub"><svg class="ic"><use href="#f-music"/></svg>音乐</li>
                <li class="sub"><svg class="ic"><use href="#f-desk"/></svg>桌面</li>
                <li class="sub"><svg class="ic"><use href="#f-win"/></svg>Windows (C:)</li>
                <li class="sub selected"><svg class="ic"><use href="#f-drive"/></svg>Data (D:)</li>
                <li class="sub"><svg class="ic"><use href="#f-drive"/></svg>My Passport (E:)</li>
                <li class="root"><svg class="ic"><use href="#f-drive"/></svg>My Passport (E:)</li>
            </ul>
            <div class="vscroll places-scroll"><svg><use href="#i-chev-bold-up"/></svg><span class="thumb"></span><svg><use href="#i-chev-bold"/></svg></div>
            <div class="files-pane">
                <table>
                    <thead>
                        <tr><th class="name">名称<svg class="sort"><use href="#i-chev-up"/></svg></th><th class="date">修改日期</th><th>类型</th></tr>
                    </thead>
                    <tbody>
                        <tr><td><svg class="ic"><use href="#f-folder"/></svg>Datasets</td><td>2024/2/5 15:05</td><td>文件夹</td></tr>
                        <tr class="selected"><td><svg class="ic"><use href="#i-logo"/></svg>Recorder_2024-02-05_15-19-38.mf4</td><td>2024/2/5 15:20</td><td>MF4 文件</td></tr>
                    </tbody>
                </table>
                <div class="hscroll"><svg><use href="#i-chev-left"/></svg><span class="thumb"></span><svg><use href="#i-chev-right"/></svg></div>
            </div>
        </div>
        <div class="dialog-foot">
            <label for="filename">文件名(N):</label>
            <div class="filename"><input id="filename" type="text" value="Recorder_2024-02-05_15-19-38.mf4"><svg><use href="#i-chev-down"/></svg></div>
            <div class="filetype"><select aria-label="File type"><option>All measurement files (*.mf4;*.mdf)</option></select><svg><use href="#i-chev-down"/></svg></div>
            <div class="actions">
                <button class="primary">打开(O)</button>
                <button>取消</button>
            </div>
        </div>
        <svg class="grip" viewBox="0 0 12 12"><path d="M8 0h3v3H8zM4 4h3v3H4zM8 4h3v3H8zM0 8h3v3H0zM4 8h3v3H4zM8 8h3v3H8z" fill="#bdbdbd"/></svg>
    </section>

    <div class="mark mark-tab"></div>
    <div class="mark mark-load"></div>
    <div class="mark mark-file"></div>

    <script>
        const plot = document.getElementById('plot');
        const x0 = 2286;
        const perSecond = 31.58;
        let shapes = '';

        function line(x1, y1, x2, y2, cls) {
            shapes += `<line x1="${x1}" y1="${y1}" x2="${x2}" y2="${y2}" class="${cls}"/>`;
        }

        for (let s = 0; s <= 44; s++) {
            const x = Math.round(x0 + s * perSecond) + 0.5;
            const major = s % 5 === 0;
            line(x, 373, x, 646, major ? 'grid-v major' : 'grid-v');
            line(x, 652, x, major ? 670 : 660, 'tick');
            if (major) {
                shapes += `<text x="${x + 4}" y="677" class="time">${s}s</text>`;
            }
        }

        [382.5, 437.5, 492.5, 547.5, 602.5].forEach((y, i) => {
            line(x0, y, 3681, y, i % 2 === 0 ? 'grid-h major' : 'grid-h');
            line(i % 2 === 0 ? 2275 : 2278, y, 2281, y, 'axis-tick');
        });

        ['0000', '0000', '0'].forEach((label, i) => {
            shapes += `<text x="2272" y="${388 + i * 110}" class="value">${label}</text>`;
        });

        line(2281.5, 373, 2281.5, 648, 'axis');
        line(2285, 651, 3681, 651, 'time-axis');
        line(x0, 602.5, 3615, 602.5, 'signal-line');
        plot.innerHTML = shapes;
    </script>
</body>
</html>
```
FILE: styles.css
```css
* {
    box-sizing: border-box;
}

body {
    margin: 0;
    height: 100vh;
    overflow: hidden;
    position: relative;
    display: flex;
    flex-direction: column;
    background: #fff;
    color: #000;
    font-family: "Open Sans", "Noto Sans CJK SC", sans-serif;
    font-size: 18px;
    line-height: 24px;
}

h1, h2, h3, p, ul {
    margin: 0;
    padding: 0;
    font-size: inherit;
    font-weight: normal;
}

ul {
    list-style: none;
}

a {
    color: inherit;
    text-decoration: none;
}

button, input, select {
    font: inherit;
    color: inherit;
    margin: 0;
    padding: 0;
    border: none;
    border-radius: 0;
    background: none;
    outline: none;
}

button {
    display: flex;
    align-items: center;
    justify-content: center;
    white-space: nowrap;
}

select {
    appearance: none;
}

svg {
    flex: none;
}

.sprite {
    position: absolute;
}

.ic {
    width: 24px;
    height: 22px;
}

.caret {
    width: 10px;
    height: 10px;
}

/* Title bar */
.titlebar {
    display: flex;
    align-items: center;
    height: 39px;
    padding: 0 12px 0 3px;
    color: #9a9a9a;
}

.titlebar .ic {
    height: 20px;
}

.titlebar h1 {
    flex: 1;
    text-align: center;
}

.window-controls {
    position: absolute;
    top: 9px;
    right: -8px;
    display: flex;
    gap: 28px;
}

.window-controls svg {
    width: 16px;
    height: 16px;
}

/* Ribbon tabs */
.tabs {
    display: flex;
    height: 34px;
    border-bottom: 1px solid #d4d4d4;
    color: #a0a0a0;
}

.tabs a {
    padding: 5px 21px 0;
    line-height: 26px;
}

.tabs .current {
    height: 34px;
    padding: 4px 20px 0;
    border: 1px solid #d4d4d4;
    border-bottom: none;
    background: #fff;
}

.app-menu {
    width: 84px;
    margin-right: 4px;
    background: #b4002f;
}

.app-menu svg {
    width: 38px;
    height: 20px;
}

.collapse {
    margin-left: auto;
    padding-right: 22px;
}

.collapse svg {
    width: 12px;
    height: 12px;
}

/* Ribbon */
.ribbon {
    display: grid;
    grid-template-columns: 399px 274px 344px 221px 252px;
    height: 134px;
    padding: 6px 0 7px;
    border-bottom: 2px solid #d4d4d4;
}

.group {
    display: flex;
    flex-direction: column;
    justify-content: space-between;
    border-right: 1px solid #d4d4d4;
}

.group h2 {
    color: #a0a0a0;
    text-align: center;
    line-height: 16px;
}

.tools {
    display: flex;
    height: 98px;
    padding-left: 2px;
    color: #dedede;
}

.tools svg {
    opacity: 0.45;
}

.tools.files {
    padding-left: 0;
}

.tools.animate {
    gap: 4px;
    padding-left: 5px;
}

.tools hr {
    width: 1px;
    height: 86px;
    margin: 4px 3px 0;
    border: none;
    background: #dcdcdc;
}

.big {
    display: block;
    align-self: flex-start;
    padding: 6px 5px 0;
    line-height: 21px;
    text-align: center;
}

.big svg {
    display: block;
    width: 40px;
    height: 38px;
    margin: 0 auto 12px;
}

.big .wide {
    width: 44px;
}

.files .big {
    padding: 6px 4px 0;
}

.big .tall {
    width: 38px;
    height: 48px;
    margin: -5px auto 7px;
}

.big .small {
    width: 20px;
    height: 20px;
    margin: 9px auto 21px;
}

.stack {
    display: flex;
    flex-direction: column;
    align-items: flex-start;
    gap: 1px;
    margin-top: -3px;
}

.stack button {
    height: 33px;
    gap: 5px;
    padding: 0 6px;
}

.stack svg {
    width: 24px;
    height: 24px;
}

.stack .caret {
    width: 10px;
    height: 10px;
    margin-left: 5px;
    color: #333;
}

.toggles button {
    background: #d8e8f5;
    color: #c3d0db;
}

.transport {
    display: grid;
    grid-template-columns: 38px 38px;
    grid-template-rows: 34px 34px 34px;
    margin: -4px 0 0 2px;
}

.transport svg {
    width: 18px;
    height: 18px;
}

/* Quick access toolbar */
.quick {
    display: flex;
    align-items: center;
    gap: 9px;
    height: 39px;
}

.quick button {
    gap: 9px;
}

.quick svg {
    width: 24px;
    height: 24px;
    opacity: 0.5;
}

.quick .caret {
    width: 10px;
    height: 10px;
}

.quick .more svg {
    width: 14px;
    height: 12px;
    opacity: 1;
}

/* Main area */
main {
    flex: 1;
    min-height: 0;
    display: flex;
}

.explorer {
    display: flex;
    flex-direction: column;
    width: 683px;
    padding-right: 5px;
    border-top: 1px solid #d4d4d4;
    border-right: 1px solid #c8c8c8;
    background: #f0f0f0;
}

.panel-title {
    display: flex;
    align-items: center;
    gap: 14px;
    height: 38px;
    margin-right: -5px;
    padding: 0 21px 0 10px;
    background: #fff;
    color: #a8a8a8;
}

.panel-title h2 {
    flex: 1;
}

.panel-title svg {
    width: 12px;
    height: 14px;
}

.combo {
    display: flex;
    align-items: center;
    height: 33px;
    margin: 5px 0 0 3px;
    padding: 2px;
    border: 1px solid #ababab;
    background: #e3e3e3;
}

.combo .ic {
    width: 30px;
    height: 27px;
    padding: 2px 3px;
    background: #fff;
}

.combo select {
    flex: 1;
    height: 27px;
    padding-left: 6px;
    background: #fff;
}

.drop {
    width: 27px;
    display: flex;
    justify-content: center;
}

.drop svg, .search-box svg, .filename svg, .filetype svg {
    width: 12px;
    height: 12px;
    color: #555;
}

.search-row {
    display: flex;
    gap: 4px;
    margin: 8px 0 0 4px;
}

.search-row button {
    width: 31px;
    height: 32px;
    border: 1px solid #ababab;
    background: #e3e3e3;
}

.search-row .ic {
    width: 20px;
    height: 18px;
}

.search-box {
    flex: 1;
    display: flex;
    align-items: center;
    padding-right: 7px;
    border: 1px solid #7a7a7a;
    background: #fff;
}

.search-box input {
    flex: 1;
    padding: 0 6px;
}

.search-row .mode {
    width: 69px;
    gap: 14px;
    font-size: 16px;
}

.mode svg {
    width: 10px;
    height: 10px;
}

.panel-tabs {
    display: flex;
    align-items: flex-end;
    margin: 8px 0 0 3px;
}

.panel-tabs button {
    gap: 8px;
    height: 29px;
    padding: 0 4px;
    border: 1px solid #d9d9d9;
    border-bottom: none;
}

.panel-tabs .current {
    height: 31px;
    padding: 0 7px;
    background: #fff;
}

.panel-tabs svg {
    width: 16px;
    height: 16px;
}

.tree-box {
    flex: 1;
    margin-left: 3px;
    border: 1px solid #7f9db9;
    background: #fff;
}

.tree-head {
    width: 346px;
    height: 31px;
    padding: 4px 12px;
    border-right: 1px solid #e5e5e5;
}

.tree li {
    display: flex;
    align-items: center;
    width: 345px;
    height: 27px;
    padding-left: 11px;
    white-space: nowrap;
}

.tree .ic {
    margin: 0 12px;
}

.tree .exp {
    width: 14px;
    height: 14px;
    color: #9a9a9a;
}

.tree .open .exp {
    color: #333;
}

.tree .sub {
    padding-left: 42px;
}

.tree .sub .ic {
    margin-right: 12px;
}

.tree .selected {
    background: #b9b9b9;
}

.tree .selected .exp {
    color: #777;
}

/* MDI workspace */
.workspace {
    flex: 1;
    display: flex;
    flex-direction: column;
    margin-left: 5px;
}

.page-tabs {
    height: 37px;
    padding: 2px 0 0 1px;
    border-bottom: 1px solid #e3e9ef;
}

.page-tabs button {
    height: 34px;
    padding: 0 9px 0 8px;
    border: 1px solid #b4d3e6;
    border-top-width: 2px;
    border-bottom: none;
}

.desktop {
    flex: 1;
    position: relative;
    background: #bac6d8;
}

.win {
    position: absolute;
    display: flex;
    flex-direction: column;
    padding: 3px;
    background: #f0f0f0;
}

.win-title {
    display: flex;
    align-items: center;
    gap: 3px;
    height: 25px;
    padding-right: 1px;
}

.win-icon {
    width: 24px;
    height: 22px;
    margin: 0 1px 0 3px;
}

.win-title h3 {
    flex: 1;
    height: 25px;
    padding-left: 11px;
    background: linear-gradient(#d5e3f0, #bccadb);
}

.win-title button {
    width: 20px;
    height: 20px;
    border: 1px solid #e2e2e2;
    background: #fff;
    color: #66727f;
}

.win-title button svg {
    width: 12px;
    height: 12px;
}

.device-win {
    left: 25px;
    top: 24px;
    width: 1190px;
}

.diagram {
    display: block;
    width: 100%;
    margin-top: 2px;
    background: #fff;
    font-family: "Liberation Sans", sans-serif;
    font-size: 18px;
}

.graphic-win {
    left: 1366px;
    top: 53px;
    width: 1633px;
}

.graphic-body {
    display: flex;
    padding: 4px 3px 1px 0;
    font-family: "Liberation Sans", sans-serif;
}

.legend {
    display: flex;
    flex-direction: column;
    width: 171px;
    margin-right: 3px;
    border-right: 1px solid #b5c4d6;
}

.legend-head {
    height: 25px;
    padding-left: 6px;
}

.signal {
    display: flex;
    align-items: center;
    gap: 4px;
    height: 25px;
    margin-right: 1px;
    padding-left: 3px;
    border: 1px solid #999;
    border-left: none;
    background: #cacaca;
}

.signal input {
    appearance: none;
    width: 14px;
    height: 14px;
    border: 1px solid #333;
    background: #fff;
}

.signal input::before {
    content: "✓";
    display: block;
    font-size: 12px;
    line-height: 12px;
    text-align: center;
}

.signal svg {
    width: 20px;
    height: 20px;
    margin-right: 5px;
}

.range {
    margin: auto 1px 0 0;
    padding: 2px 4px 1px;
    border: 1px solid #a5a5a5;
    border-top-color: #fff;
    line-height: 22px;
}

.plot-area {
    flex: 1;
}

.plot {
    display: block;
    width: 100%;
    background: #000;
    font-size: 18px;
}

.plot line {
    stroke: #074f07;
}

.plot .grid-v {
    stroke-dasharray: 6 6;
}

.plot .grid-h {
    stroke-dasharray: 3 3;
}

.plot .major {
    stroke: #0b8a0b;
}

.plot .tick {
    stroke: #fff;
}

.plot .time-axis {
    stroke: #fff;
    stroke-width: 3;
}

.plot .axis {
    stroke: #0f0;
    stroke-width: 3;
}

.plot .axis-tick {
    stroke: #0f0;
}

.plot .signal-line {
    stroke: #0f0;
    stroke-width: 4;
}

.plot .time {
    fill: #fff;
}

.plot .value {
    fill: #0f0;
    text-anchor: end;
}

/* Scroll bars */
.hscroll, .vscroll {
    display: flex;
    align-items: center;
    justify-content: space-between;
    background: #f0f0f0;
    color: #555;
}

.hscroll {
    height: 24px;
}

.vscroll {
    flex-direction: column;
    width: 26px;
}

.hscroll svg, .vscroll svg {
    width: 26px;
    height: 26px;
    padding: 6px;
}

.thumb {
    background: #cdcdcd;
}

.hscroll .thumb {
    height: 24px;
    width: 26px;
}

.vscroll .thumb {
    width: 24px;
}

.plot-scroll {
    margin: 1px 0 0 54px;
}

.plot-scroll .thumb {
    flex: 1;
}

/* Parameter explorer */
.param-win {
    left: 25px;
    top: 840px;
    width: 750px;
    height: 450px;
    border: 3px double #8a8a8a;
    padding: 1px;
}

.param-win .win-title h3 {
    background: linear-gradient(#b0cae5, #93afce);
}

.content-of {
    display: flex;
    align-items: center;
    gap: 14px;
    height: 55px;
    margin-top: 1px;
    padding-left: 31px;
    border-top: 1px solid #a0a0a0;
    font-family: "Liberation Sans", sans-serif;
    font-size: 16px;
}

.content-of input {
    width: 220px;
    height: 27px;
    padding-left: 4px;
    border: 1px solid #7a7a7a;
    background: #fff;
}

.param-body {
    flex: 1;
    min-height: 0;
    display: flex;
    gap: 5px;
}

.param-list {
    display: flex;
    flex-direction: column;
    width: 272px;
    border: 1px solid #7a7a7a;
    border-width: 1px 0 0 1px;
    background: #fff;
}

.list-head {
    height: 25px;
    padding-left: 8px;
    font-size: 16px;
}

.list-main {
    flex: 1;
    min-height: 0;
    display: flex;
}

.list-main ul {
    flex: 1;
}

.list-main li {
    display: flex;
    align-items: center;
    gap: 10px;
    height: 26px;
    padding-left: 37px;
}

.list-main .selected {
    background: #d9d9d9;
}

.list-main .vscroll {
    justify-content: flex-end;
}

.param-list .hscroll .thumb {
    margin-right: auto;
}

.param-view {
    flex: 1;
    border-left: 1px solid #7a7a7a;
    background: #fff;
}

.credit {
    position: absolute;
    right: 16px;
    bottom: 6px;
    color: #dfe3e8;
    font-family: "Liberation Sans", "Noto Sans CJK SC", sans-serif;
    font-size: 20px;
    line-height: 28px;
    text-shadow: 1px 1px 1px #6c7480;
}

/* File dialog */
.dialog {
    position: absolute;
    left: 897px;
    top: 572px;
    width: 1180px;
    display: flex;
    flex-direction: column;
    border: 1px solid #5c6066;
    background: #fff;
    box-shadow: 0 6px 22px rgba(0, 0, 0, 0.45);
}

.dialog-title {
    display: flex;
    align-items: center;
    height: 42px;
    padding: 0 17px 0 11px;
}

.dialog-title .ic {
    height: 20px;
}

.dialog-title h2 {
    flex: 1;
    padding-left: 4px;
}

.dialog-title button svg {
    width: 16px;
    height: 16px;
}

.nav-row {
    display: flex;
    align-items: center;
    height: 53px;
    padding: 0 12px 0 19px;
    color: #777;
}

.nav-row button svg {
    width: 20px;
    height: 20px;
}

.nav-row .off {
    margin-right: 26px;
    color: #d5d5d5;
}

.nav-row .off + .off {
    margin-right: 19px;
}

.nav-row .off.recent {
    margin-right: 14px;
}

.nav-row .recent svg {
    width: 11px;
    height: 11px;
}

.nav-row .up {
    margin-right: 8px;
}

.address {
    flex: 1;
    display: flex;
    align-items: center;
    gap: 10px;
    height: 31px;
    padding-left: 6px;
    border: 1px solid #d9d9d9;
}

.address a {
    color: #000;
}

.address svg {
    width: 13px;
    height: 13px;
}

.address .f-folder {
    width: 15px;
    height: 24px;
}

.address .root {
    padding: 0 2px;
}

.address .history {
    margin-left: auto;
    margin-right: -4px;
}

.address button {
    height: 29px;
    padding: 0 4px;
    border-left: 1px solid #d9d9d9;
}

.nav-row .find {
    display: flex;
    align-items: center;
    width: 305px;
    height: 33px;
    margin-left: 12px;
    padding: 0 12px 0 10px;
    border: 1px solid #d9d9d9;
}

.find input {
    flex: 1;
    min-width: 0;
}

.find input::placeholder {
    color: #6d6d6d;
    opacity: 1;
}

.find svg {
    width: 18px;
    height: 18px;
}

.commands {
    display: flex;
    align-items: center;
    height: 48px;
    padding: 0 24px 0 28px;
    border-bottom: 1px solid #e5e5e5;
    background: #f5f6f7;
    color: #1e395b;
}

.commands button {
    gap: 8px;
    margin-right: 44px;
}

.commands svg {
    width: 22px;
    height: 22px;
}

.commands .caret {
    width: 8px;
    height: 8px;
}

.commands .view {
    gap: 16px;
    margin: 0 32px 0 auto;
}

.commands .pane {
    margin-right: 32px;
}

.commands .help {
    margin-right: 0;
}

.panes {
    display: flex;
    height: 622px;
}

.places {
    width: 319px;
}

.places li {
    display: flex;
    align-items: center;
    height: 36px;
}

.places .ic {
    margin-right: 5px;
}

.places .sub {
    padding-left: 48px;
}

.places .root {
    margin-top: 12px;
    padding-left: 36px;
}

.places .selected {
    background: #d9d9d9;
}

.places .pin {
    width: 18px;
    height: 18px;
    margin: 0 4px 0 auto;
}

.places-scroll .thumb {
    height: 398px;
    margin: 0 auto auto;
}

.places-scroll svg:first-child {
    margin-bottom: 79px;
}

.files-pane {
    flex: 1;
    display: flex;
    flex-direction: column;
    justify-content: space-between;
    margin-left: 2px;
    padding-left: 3px;
    border-left: 1px solid #f0f0f0;
}

.files-pane table {
    width: 806px;
    margin-left: auto;
    table-layout: fixed;
    border-collapse: collapse;
    color: #6d6d6d;
}

.files-pane th {
    position: relative;
    height: 41px;
    padding: 0 0 0 9px;
    border-left: 1px solid #e5e5e5;
    color: #4c607a;
    font-weight: normal;
    text-align: left;
}

.files-pane .name {
    width: 437px;
    padding-left: 4px;
    border-left: none;
}

.files-pane .date {
    width: 203px;
}

.files-pane .sort {
    position: absolute;
    top: 0;
    left: 210px;
    width: 12px;
    height: 10px;
}

.files-pane td {
    height: 32px;
    padding: 0 0 0 10px;
    font-size: 19px;
    white-space: nowrap;
}

.files-pane td:last-child {
    font-size: 18px;
}

.files-pane tbody::before {
    content: "";
    display: block;
    height: 7px;
}

.files-pane td:first-child {
    display: flex;
    align-items: center;
    gap: 5px;
    padding-left: 7px;
    color: #000;
}

.files-pane .selected td {
    background: #cce8ff;
    box-shadow: inset 0 1px #99d1ff, inset 0 -1px #99d1ff;
}

.files-pane .thumb {
    width: 632px;
    margin-right: auto;
}

.dialog-foot {
    display: grid;
    grid-template-columns: 1fr 554px 292px;
    column-gap: 8px;
    row-gap: 9px;
    align-items: center;
    height: 124px;
    padding: 25px 27px 20px 0;
    background: #f0f0f0;
}

.dialog-foot label {
    text-align: right;
}

.filename, .filetype {
    display: flex;
    align-items: center;
    height: 33px;
    padding-right: 7px;
    border: 1px solid #7a7a7a;
    background: #fff;
}

.filename input {
    flex: 1;
    padding-left: 3px;
    font-size: 19px;
}

.filetype {
    margin-left: 10px;
    border-color: #ababab;
    background: #e3e3e3;
}

.filetype select {
    flex: 1;
    min-width: 0;
    height: 31px;
    margin-right: 8px;
    padding-left: 3px;
}

.actions {
    grid-column: 3;
    display: flex;
    justify-content: space-between;
    margin-left: 10px;
}

.actions button {
    width: 130px;
    height: 37px;
    border: 1px solid #ababab;
    background: #e1e1e1;
}

.actions .primary {
    border: 2px solid #0078d7;
}

.grip {
    position: absolute;
    right: 3px;
    bottom: 2px;
    width: 12px;
    height: 12px;
}

/* Red highlight frames */
.mark {
    position: absolute;
    border: 6px solid #f84d48;
    border-radius: 8px;
}

.mark-tab {
    left: 505px;
    top: 4px;
    width: 133px;
    height: 86px;
}

.mark-load {
    left: -3px;
    top: 75px;
    width: 72px;
    height: 102px;
}

.mark-file {
    left: 1257px;
    top: 788px;
    width: 548px;
    height: 127px;
}
```
